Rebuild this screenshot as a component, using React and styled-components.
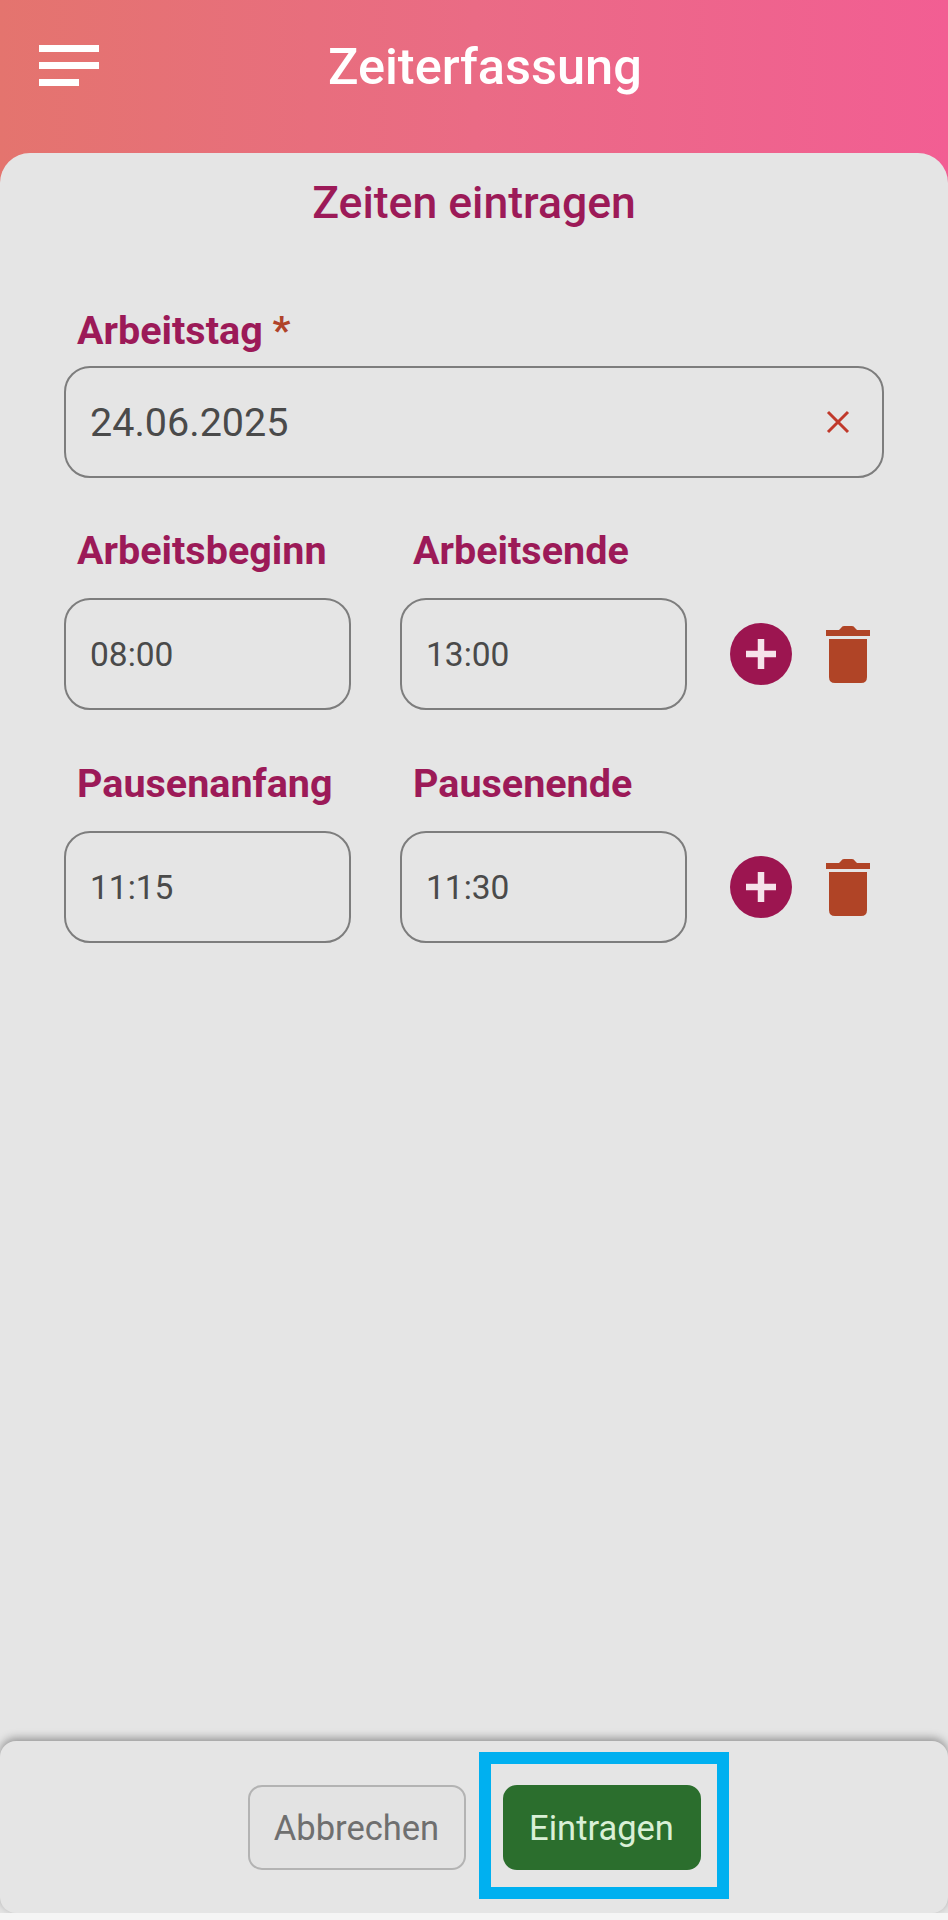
import React from "react";
import styled, { createGlobalStyle } from "styled-components";

const GlobalStyle = createGlobalStyle`
  html, body {
    margin: 0;
    padding: 0;
    background: #f5f5f5;
  }
  * { box-sizing: border-box; }
`;

const Page = styled.div`
  width: 948px;
  height: 1920px;
  display: flex;
  flex-direction: column;
  font-family: Roboto, "Liberation Sans", sans-serif;
  background: linear-gradient(90deg, #e4746e 0%, #ea6b85 50%, #f25e93 100%);
  overflow: hidden;
`;

const Header = styled.header`
  height: 153px;
  flex: none;
  display: flex;
  align-items: flex-start;
  padding: 45px 0 0 39px;
`;

const Burger = styled.div`
  width: 60px;
  display: flex;
  flex-direction: column;
  gap: 10px;
  flex: none;
`;

const BurgerLine = styled.span`
  display: block;
  height: 7px;
  width: ${(p) => (p.$short ? "40px" : "60px")};
  background: #fff;
`;

const AppTitle = styled.h1`
  margin: -6px 0 0 229px;
  font-size: 50.5px;
  line-height: 56px;
  font-weight: 500;
  color: #fff;
`;

const Sheet = styled.main`
  flex: 1;
  display: flex;
  flex-direction: column;
  background: #e5e5e5;
  border-radius: 30px 30px 0 0;
`;

const SheetTitle = styled.h2`
  margin: 25px 0 0;
  text-align: center;
  font-size: 44.5px;
  line-height: 50px;
  font-weight: 500;
  color: #9c1a58;
`;

const Form = styled.form`
  flex: 1;
  display: flex;
  flex-direction: column;
  padding: 0 64px;
`;

const DayField = styled.div`
  margin-top: 81px;
`;

const Label = styled.label`
  display: block;
  padding-left: 13px;
  font-size: 39.5px;
  line-height: 44px;
  font-weight: 700;
  color: #9c1a58;
  margin-bottom: ${(p) => p.$gap || "25px"};
`;

const Star = styled.span`
  color: #b0432a;
`;

const InputBox = styled.div`
  width: ${(p) => p.$width || "100%"};
  height: 112px;
  display: flex;
  align-items: center;
  justify-content: space-between;
  padding: 0 32px 0 24px;
  border: 2px solid #7d7d7d;
  border-radius: 26px;
  color: #4a4a4a;
  font-size: ${(p) => p.$size || "33.5px"};
`;

const TimeRow = styled.div`
  display: flex;
  align-items: flex-end;
  margin-top: ${(p) => p.$top};
`;

const TimeField = styled.div`
  width: 287px;
  margin-right: 49px;
  flex: none;
`;

const Actions = styled.div`
  height: 112px;
  display: flex;
  align-items: center;
  gap: 34px;
  margin-left: -6px;
`;

const IconSvg = styled.svg`
  display: block;
  flex: none;
`;

const Footer = styled.footer`
  height: 172px;
  flex: none;
  display: flex;
  justify-content: center;
  align-items: flex-start;
  gap: 37px;
  padding: 44px 0 0;
  background: #e5e5e5;
  border-radius: 16px;
  box-shadow: 0 -3px 8px rgba(0, 0, 0, 0.35);
`;

const Button = styled.button`
  position: relative;
  width: ${(p) => p.$width};
  height: 85px;
  padding: 0;
  font-family: inherit;
  font-size: 34.5px;
  border-radius: 14px;
  border: ${(p) => (p.$primary ? "none" : "2px solid #b3b3b3")};
  background: ${(p) => (p.$primary ? "#2b6e2d" : "#e3e3e3")};
  color: ${(p) => (p.$primary ? "#d9f0d6" : "#6f6f6f")};
`;

const Highlight = styled.span`
  position: absolute;
  left: -24px;
  right: -28px;
  top: -33px;
  bottom: -29px;
  border: 12px solid #00b0f0;
  pointer-events: none;
`;

const Strip = styled.div`
  height: 7px;
  flex: none;
  background: #f5f5f5;
`;

const PlusIcon = () => (
  <IconSvg width="62" height="62" viewBox="0 0 62 62">
    <circle cx="31" cy="31" r="31" fill="#9c1550" />
    <path d="M31 16v30M16 31h30" stroke="#f6e3ea" strokeWidth="6.5" />
  </IconSvg>
);

const TrashIcon = () => (
  <IconSvg width="44" height="57" viewBox="0 0 44 57">
    <path d="M0 4h13l2-2q1-2 3-2h8q2 0 3 2l2 2h13v6H0z" fill="#b04426" />
    <path d="M3 13h38v38q0 6-6 6H9q-6 0-6-6z" fill="#b04426" />
  </IconSvg>
);

const CloseIcon = () => (
  <IconSvg width="24" height="24" viewBox="0 0 24 24">
    <path d="M2 2l20 20M22 2L2 22" stroke="#c0392b" strokeWidth="3" fill="none" />
  </IconSvg>
);

const rows = [
  { top: "51px", left: "Arbeitsbeginn", right: "Arbeitsende", from: "08:00", to: "13:00" },
  { top: "52px", left: "Pausenanfang", right: "Pausenende", from: "11:15", to: "11:30" },
];

export default function App() {
  return (
    <>
      <GlobalStyle />
      <Page>
        <Header>
          <Burger>
            <BurgerLine />
            <BurgerLine />
            <BurgerLine $short />
          </Burger>
          <AppTitle>Zeiterfassung</AppTitle>
        </Header>
        <Sheet>
          <SheetTitle>Zeiten eintragen</SheetTitle>
          <Form>
            <DayField>
              <Label $gap="13px">
                Arbeitstag <Star>*</Star>
              </Label>
              <InputBox $width="820px" $size="39.5px">
                24.06.2025
                <CloseIcon />
              </InputBox>
            </DayField>
            {rows.map((row) => (
              <TimeRow key={row.left} $top={row.top}>
                <TimeField>
                  <Label>{row.left}</Label>
                  <InputBox>{row.from}</InputBox>
                </TimeField>
                <TimeField>
                  <Label>{row.right}</Label>
                  <InputBox>{row.to}</InputBox>
                </TimeField>
                <Actions>
                  <PlusIcon />
                  <TrashIcon />
                </Actions>
              </TimeRow>
            ))}
          </Form>
          <Footer>
            <Button type="button" $width="218px">
              Abbrechen
            </Button>
            <Button type="button" $primary $width="198px">
              Eintragen
              <Highlight />
            </Button>
          </Footer>
          <Strip />
        </Sheet>
      </Page>
    </>
  );
}
